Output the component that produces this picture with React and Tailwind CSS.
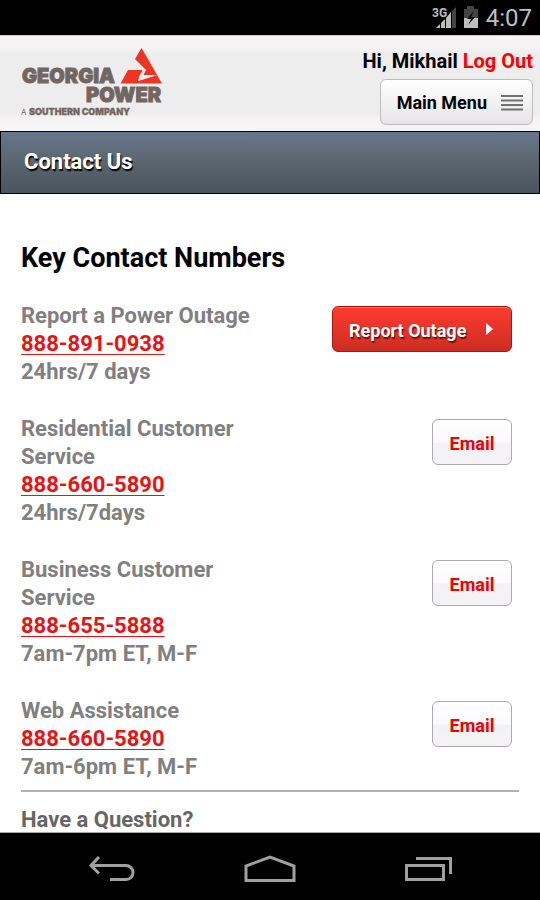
const CONTACTS = [
  { name: "Report a Power Outage", phone: "888-891-0938", hours: "24hrs/7 days", action: "outage" },
  { name: "Residential Customer Service", phone: "888-660-5890", hours: "24hrs/7days", action: "email" },
  { name: "Business Customer Service", phone: "888-655-5888", hours: "7am-7pm ET, M-F", action: "email" },
  { name: "Web Assistance", phone: "888-660-5890", hours: "7am-6pm ET, M-F", action: "email" },
];

function StatusBar() {
  return (
    <div className="flex h-[35px] shrink-0 items-center justify-end bg-black pr-2 text-[#bebebe]">
      <svg width="48" height="24" viewBox="0 0 48 24" className="mr-1.5" role="img" aria-label="3G signal, battery charging">
        <text x="0" y="11" fontFamily="Roboto" fontWeight="700" fontSize="12" fill="#bebebe">3G</text>
        <path d="M24 1v21h-4V5z" fill="#444" />
        <path d="M4 22l4-4v4zM9 22v-5l4-4v9zM14 22V12l5-6v16z" fill="#bebebe" />
        <path d="M35 0h7v3h4v9H32V3h3z" fill="#444" />
        <path d="M32 12h14v10H32z" fill="#bebebe" />
        <path d="M42 5l-7 8h4l-3 6 7-8h-4z" fill="#000" />
      </svg>
      <span className="text-2xl font-normal leading-9">4:07</span>
    </div>
  );
}

function Logo() {
  return (
    <a href="#home" aria-label="Georgia Power" className="block">
      <svg width="142" height="70" viewBox="0 0 142 70">
        <g fontFamily="Inter" fontWeight="900" fill="#736660" stroke="#736660">
          <text x="1" y="35" fontSize="20" strokeWidth="0.9">GEORGIA</text>
          <text x="140" y="54" fontSize="20" strokeWidth="0.9" textAnchor="end">POWER</text>
          <text x="8" y="67" fontSize="9" strokeWidth="0.3">SOUTHERN COMPANY</text>
          <text x="0" y="67" fontSize="8" fontWeight="400" stroke="none">A</text>
        </g>
        <path d="M120.500 0L114 11L125 22L122 27L136 27L117 33L119 27L122 22H107L99.500 35.500H141Z" fill="#ee3524" />
        <path d="M122 21.500L119 27L117 33L136 27L122.500 27L125 21.500Z" fill="#eee" />
      </svg>
    </a>
  );
}

function Header() {
  return (
    <header className="flex h-24 shrink-0 items-start justify-between border-t border-[#ccc] bg-[linear-gradient(#f6f4f5_0,#f3f1f2_14px,#ededed_18px,#ededed_78px,#f5f2f4_82px,#f7f7f7_100%)] pl-[21px] pr-[7px]">
      <div className="pt-3"><Logo /></div>
      <div className="flex flex-col items-end">
        <p className="mt-[13px] text-xl font-bold leading-6 text-black">
          Hi, Mikhail <a href="#logout" className="text-[#fe0000]">Log Out</a>
        </p>
        <button type="button" className="mt-1.5 flex h-[46px] items-center gap-3.5 rounded-md border border-[#bdbdbd] bg-linear-to-b from-white to-[#e6e4e6] pl-4 pr-[9px] pt-0.5 text-lg font-bold text-black">
          Main Menu
          <svg width="22" height="16" viewBox="0 0 22 16" aria-hidden="true">
            <path d="M0 1h22M0 5.500h22M0 10h22M0 14.500h22" stroke="#707070" strokeWidth="2" />
          </svg>
        </button>
      </div>
    </header>
  );
}

function Action({ type }) {
  if (type === "outage") {
    return (
      <button type="button" className="flex h-[46px] w-[180px] items-center justify-between rounded-md border border-[#ad1410] bg-linear-to-b from-[#fe3b30] to-[#cd2d22] pl-4 pr-[18px] pt-1 text-lg font-bold text-white inset-shadow-[0_1px_0_#ff6a60] text-shadow-[1px_2px_1px_#701008]">
        Report Outage
        <svg width="7" height="12" viewBox="0 0 7 12" aria-hidden="true" className="mb-1"><path d="M0 0l7 6-7 6z" fill="#fff" /></svg>
      </button>
    );
  }
  return (
    <button type="button" className="h-[46px] w-20 rounded-md border border-[#ababab] bg-[linear-gradient(#fff_0,#fcf9fd_50%,#f3f2f3_52%,#f4f2f5_100%)] pt-1 text-lg font-bold text-[#f00000]">
      Email
    </button>
  );
}

function NavBar() {
  return (
    <nav className="grid h-[67px] shrink-0 grid-cols-[1fr_90px_1fr] items-center bg-black px-[88px] pt-1 text-[#a0a0a0]">
      <button type="button" aria-label="Back" className="justify-self-start">
        <svg width="48" height="26" viewBox="0 0 48 26" fill="none" stroke="currentColor" strokeWidth="3">
          <path d="M11 1L3 9.500l8 8M3 9.500h35a7 7 0 0 1 0 14H22" />
        </svg>
      </button>
      <button type="button" aria-label="Home" className="justify-self-center">
        <svg width="52" height="28" viewBox="0 0 52 28" fill="none" stroke="currentColor" strokeWidth="3">
          <path d="M2 25.500V11L26 2l24 9v14.500z" />
        </svg>
      </button>
      <button type="button" aria-label="Recent apps" className="justify-self-end">
        <svg width="48" height="26" viewBox="0 0 48 26" fill="none" stroke="currentColor" strokeWidth="3">
          <path d="M2.500 9.500h37v14h-37zM12 2.500h34.500V18" />
        </svg>
      </button>
    </nav>
  );
}

export default function App() {
  return (
    <div className="flex h-screen flex-col overflow-hidden bg-white font-['Roboto',sans-serif]">
      <StatusBar />
      <Header />
      <div className="h-[63px] shrink-0 border border-black bg-linear-to-b from-[#67778b] via-[#5b6570] to-[#48545e] px-[23px] pt-3.5">
        <h1 className="text-[22px] font-bold leading-8 text-white text-shadow-[1px_2px_1px_#000]">Contact Us</h1>
      </div>
      <main className="min-h-0 flex-1 overflow-hidden border-b border-[#aaa] px-[21px] pt-12">
        <h2 className="text-[27px] font-bold leading-8 text-black">Key Contact Numbers</h2>
        <ul className="mt-7 flex flex-col gap-[29px] pr-[7px]">
          {CONTACTS.map(c => (
            <li key={c.name} className="flex items-start justify-between">
              <div className="w-1/2 text-[22px] font-bold leading-7 text-[#808080]">
                <p>{c.name}</p>
                <a href={`tel:${c.phone}`} className="text-[#e61414] underline decoration-1 underline-offset-3">{c.phone}</a>
                <p>{c.hours}</p>
              </div>
              <div className="mt-1"><Action type={c.action} /></div>
            </li>
          ))}
        </ul>
        <hr className="mt-[9px] border-t-2 border-[#b0b0b0]" />
        <h3 className="mt-3.5 text-[22px] font-bold leading-7 text-[#666]">Have a Question?</h3>
      </main>
      <NavBar />
    </div>
  );
}
